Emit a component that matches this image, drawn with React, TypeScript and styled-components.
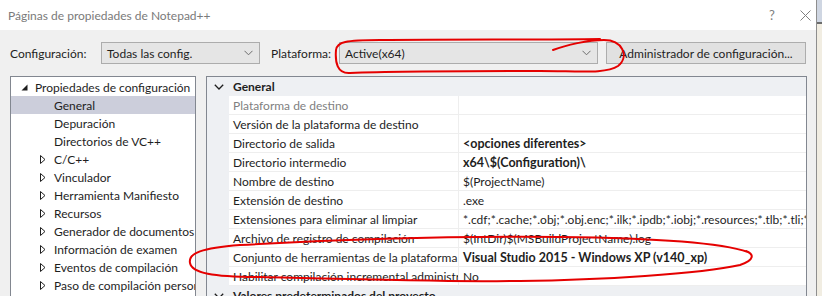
import React from "react";
import styled, { createGlobalStyle } from "styled-components";

const GlobalStyle = createGlobalStyle`
  html, body { margin: 0; padding: 0; background: #f0f0f0; }
  body { font-family: Lato, "Noto Sans", "Liberation Sans", sans-serif; font-size: 12px; color: #1e1e1e; }
`;

const Window = styled.div`
  position: relative;
  display: flex;
  width: 822px;
  height: 296px;
  overflow: hidden;
`;

const Dialog = styled.div`
  flex: 0 0 816px;
  width: 816px;
  min-width: 0;
  overflow: hidden;
  display: flex;
  flex-direction: column;
  background: #f0f0f0;
  border-right: 1px solid #8e8e8e;
  min-height: 0;
`;

const BackStrip = styled.div`
  flex: 1;
  background: linear-gradient(to bottom, #cfd6e2 0, #cfd6e2 22px, #6c6c6c 22px, #6c6c6c 24px, #f1ede2 24px);
`;

const TitleBar = styled.div`
  flex: 0 0 30px;
  display: flex;
  align-items: center;
  background: #ffffff;
  padding-left: 8px;
`;

const Title = styled.div`
  flex: 1;
  min-width: 0;
  color: #7a7a7a;
  font-size: 12px;
  white-space: nowrap;
`;

const CaptionButton = styled.div<{ $w: number }>`
  flex: 0 0 ${(p) => p.$w}px;
  height: 30px;
  display: flex;
  align-items: center;
  justify-content: center;
  color: #808080;
  font-size: 13px;
`;

const Toolbar = styled.div`
  flex: 0 0 46px;
  display: flex;
  align-items: center;
  padding: 0 10px;
`;

const ToolLabel = styled.div<{ $w: number; $pad?: number }>`
  flex: 0 0 ${(p) => p.$w}px;
  box-sizing: border-box;
  padding-left: ${(p) => p.$pad ?? 0}px;
  white-space: nowrap;
`;

const Combo = styled.div<{ $w: number }>`
  flex: 0 0 ${(p) => p.$w}px;
  height: 22px;
  box-sizing: border-box;
  display: flex;
  align-items: center;
  justify-content: space-between;
  padding: 0 6px 0 5px;
  background: #e5e5e5;
  border: 1px solid #acacac;
`;

const Button = styled.div`
  flex: 0 0 200px;
  height: 22px;
  box-sizing: border-box;
  margin-left: 8px;
  display: flex;
  align-items: center;
  justify-content: center;
  background: #e1e1e1;
  border: 1px solid #adadad;
  white-space: nowrap;
`;

const Content = styled.div`
  flex: 1;
  display: flex;
  align-items: flex-start;
  gap: 10px;
  padding: 0 9px 0 10px;
  min-height: 0;
`;

const Tree = styled.div`
  flex: 0 0 186px;
  box-sizing: border-box;
  height: 260px;
  background: #ffffff;
  border: 1px solid #828790;
  padding-top: 1px;
  overflow: hidden;
`;

const TreeRow = styled.div<{ $level: number; $selected?: boolean }>`
  height: 18px;
  display: flex;
  align-items: center;
  padding-left: ${(p) => 10 + p.$level * 19}px;
  background: ${(p) => (p.$selected ? "#cccedb" : "transparent")};
  white-space: nowrap;
`;

const Toggle = styled.span`
  flex: 0 0 14px;
  display: flex;
  align-items: center;
`;

const Grid = styled.div`
  flex: 1;
  min-width: 0;
  box-sizing: border-box;
  height: 260px;
  background: #ffffff;
  border: 1px solid #828790;
  overflow: hidden;
`;

const Category = styled.div`
  height: 19px;
  display: flex;
  align-items: center;
  background: #eef0f3;
  font-weight: 700;
  white-space: nowrap;
`;

const CatIcon = styled.span`
  flex: 0 0 22px;
  display: flex;
  justify-content: center;
  padding-left: 2px;
  box-sizing: border-box;
`;

const CatLabel = styled.span`
  padding-left: 4px;
`;

const PropRow = styled.div`
  height: 19px;
  display: flex;
  white-space: nowrap;
`;

const Gutter = styled.div`
  flex: 0 0 22px;
  background: #eef0f3;
`;

const NameCell = styled.div<{ $dim?: boolean }>`
  flex: 0 0 230px;
  box-sizing: border-box;
  display: flex;
  align-items: center;
  padding-left: 4px;
  overflow: hidden;
  border-bottom: 1px solid #eeeeee;
  border-right: 1px solid #eeeeee;
  color: ${(p) => (p.$dim ? "#7f7f7f" : "#1e1e1e")};
`;

const ValueCell = styled.div<{ $bold?: boolean }>`
  flex: 1;
  min-width: 0;
  box-sizing: border-box;
  display: flex;
  align-items: center;
  padding-left: 4px;
  overflow: hidden;
  border-bottom: 1px solid #eeeeee;
  font-weight: ${(p) => (p.$bold ? 700 : 400)};
  font-size: ${(p) => (p.$bold ? "12.5px" : "12px")};
`;

const Annotations = styled.svg`
  position: absolute;
  left: 0;
  top: 0;
  pointer-events: none;
`;

const ComboChevron = () => (
  <svg width="9" height="6" viewBox="0 0 9 6">
    <polyline points="0.5,0.8 4.5,4.8 8.5,0.8" fill="none" stroke="#6d6d6d" strokeWidth="1" />
  </svg>
);

const Expanded = () => (
  <svg width="7" height="7" viewBox="0 0 7 7">
    <polygon points="6.5,0.5 6.5,6.5 0.5,6.5" fill="#1e1e1e" />
  </svg>
);

const Collapsed = () => (
  <svg width="6" height="9" viewBox="0 0 6 9">
    <polygon points="0.5,0.5 5,4.5 0.5,8.5" fill="none" stroke="#1e1e1e" strokeWidth="1" />
  </svg>
);

const CatChevron = () => (
  <svg width="10" height="6" viewBox="0 0 10 6">
    <polyline points="0.8,0.8 5,5 9.2,0.8" fill="none" stroke="#1e1e1e" strokeWidth="1.3" />
  </svg>
);

const treeItems: { label: string; level: number; kind: "open" | "closed" | "leaf"; selected?: boolean }[] = [
  { label: "Propiedades de configuración", level: 0, kind: "open" },
  { label: "General", level: 1, kind: "leaf", selected: true },
  { label: "Depuración", level: 1, kind: "leaf" },
  { label: "Directorios de VC++", level: 1, kind: "leaf" },
  { label: "C/C++", level: 1, kind: "closed" },
  { label: "Vinculador", level: 1, kind: "closed" },
  { label: "Herramienta Manifiesto", level: 1, kind: "closed" },
  { label: "Recursos", level: 1, kind: "closed" },
  { label: "Generador de documentos XML", level: 1, kind: "closed" },
  { label: "Información de examen", level: 1, kind: "closed" },
  { label: "Eventos de compilación", level: 1, kind: "closed" },
  { label: "Paso de compilación personalizado", level: 1, kind: "closed" },
  { label: "Análisis de código", level: 1, kind: "closed" },
];

const props: { name: string; value: string; bold?: boolean; dim?: boolean }[] = [
  { name: "Plataforma de destino", value: "", dim: true },
  { name: "Versión de la plataforma de destino", value: "" },
  { name: "Directorio de salida", value: "<opciones diferentes>", bold: true },
  { name: "Directorio intermedio", value: "x64\\$(Configuration)\\", bold: true },
  { name: "Nombre de destino", value: "$(ProjectName)" },
  { name: "Extensión de destino", value: ".exe" },
  {
    name: "Extensiones para eliminar al limpiar",
    value: "*.cdf;*.cache;*.obj;*.obj.enc;*.ilk;*.ipdb;*.iobj;*.resources;*.tlb;*.tli;*.tlh;*.tmp;*.rsp",
  },
  { name: "Archivo de registro de compilación", value: "$(IntDir)$(MSBuildProjectName).log" },
  { name: "Conjunto de herramientas de la plataforma", value: "Visual Studio 2015 - Windows XP (v140_xp)", bold: true },
  { name: "Habilitar compilación incremental administrada", value: "No" },
];

export default function App() {
  return (
    <>
      <GlobalStyle />
      <Window>
        <Dialog>
          <TitleBar>
            <Title>Páginas de propiedades de Notepad++</Title>
            <CaptionButton $w={22}>?</CaptionButton>
            <CaptionButton $w={11} />
            <CaptionButton $w={22}>
              <svg width="11" height="11" viewBox="0 0 11 11">
                <path d="M0.5 0.5 L10.5 10.5 M10.5 0.5 L0.5 10.5" stroke="#808080" strokeWidth="1" />
              </svg>
            </CaptionButton>
          </TitleBar>
          <Toolbar>
            <ToolLabel $w={91}>Configuración:</ToolLabel>
            <Combo $w={159}>
              <span>Todas las config.</span>
              <ComboChevron />
            </Combo>
            <ToolLabel $w={79} $pad={11}>
              Plataforma:
            </ToolLabel>
            <Combo $w={259}>
              <span>Active(x64)</span>
              <ComboChevron />
            </Combo>
            <Button>Administrador de configuración...</Button>
          </Toolbar>
          <Content>
            <Tree>
              {treeItems.map((t) => (
                <TreeRow key={t.label} $level={t.level} $selected={t.selected}>
                  <Toggle>{t.kind === "open" ? <Expanded /> : t.kind === "closed" ? <Collapsed /> : null}</Toggle>
                  {t.label}
                </TreeRow>
              ))}
            </Tree>
            <Grid>
              <Category>
                <CatIcon>
                  <CatChevron />
                </CatIcon>
                <CatLabel>General</CatLabel>
              </Category>
              {props.map((p) => (
                <PropRow key={p.name}>
                  <Gutter />
                  <NameCell $dim={p.dim}>{p.name}</NameCell>
                  <ValueCell $bold={p.bold}>{p.value}</ValueCell>
                </PropRow>
              ))}
              <Category>
                <CatIcon>
                  <CatChevron />
                </CatIcon>
                <CatLabel>Valores predeterminados del proyecto</CatLabel>
              </Category>
            </Grid>
          </Content>
        </Dialog>
        <BackStrip />
        <Annotations width="822" height="296" viewBox="0 0 822 296">
          <path
            d="M553 50 C566 45 588 40 604 40 C622 40 630 56 618 66 C606 74 580 71 540 71 C470 71 400 71 350 73 C337 74 335 62 336 50 C337 42 345 40 380 40 C450 39 540 40 600 39"
            fill="none"
            stroke="#e50000"
            strokeWidth="2"
            strokeLinecap="round"
          />
          <path
            d="M748 252 C722 243 650 238 560 237 C450 236 330 240 240 245 C202 248 188 253 190 263 C192 273 212 277 260 277 C360 279 450 282 520 281 C600 280 700 274 740 265 C755 260 754 254 746 251"
            fill="none"
            stroke="#e50000"
            strokeWidth="2"
            strokeLinecap="round"
          />
        </Annotations>
      </Window>
    </>
  );
}
